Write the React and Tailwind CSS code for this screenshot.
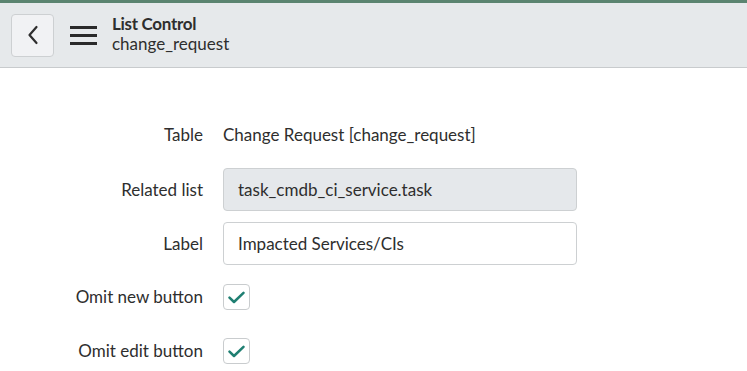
import React from "react";

const Check = () => (
  <div className="w-[27px] h-[26px] rounded-[4px] border border-[#c9ccce] bg-white flex items-center justify-center">
    <svg width="17" height="13" viewBox="0 0 17 13" fill="none">
      <path d="M1.5 6.6 L6 11 L15.5 1.8" stroke="#1f7f72" strokeWidth="2.5" strokeLinecap="round" strokeLinejoin="round" />
    </svg>
  </div>
);

const Row = ({ label, children, className = "" }) => (
  <div className={`flex items-center ${className}`}>
    <div className="w-[203px] text-right text-[17px] leading-[24px] text-[#2e2e2e]">{label}</div>
    <div className="ml-[20px] flex items-center">{children}</div>
  </div>
);

export default function App() {
  return (
    <div
      className="w-[747px] h-[371px] bg-white overflow-hidden text-[#2e2e2e]"
      style={{ fontFamily: "Lato, 'Open Sans', sans-serif" }}
    >
      <div className="h-[3px] bg-[#5b8470]" />
      <div className="h-[65px] bg-[#e6e9eb] border-b border-[#c8cbcd] flex items-center">
        <button className="ml-[11px] w-[43px] h-[43px] rounded-[4px] border border-[#cdd0d2] bg-[#f1f2f4] flex items-center justify-center">
          <svg width="12" height="20" viewBox="0 0 12 20" fill="none">
            <path d="M9.5 2 L2.5 10 L9.5 18" stroke="#2e2e2e" strokeWidth="2.2" strokeLinecap="round" strokeLinejoin="round" />
          </svg>
        </button>
        <div className="ml-[16px] flex flex-col gap-[5px]">
          <div className="w-[27px] h-[3px] bg-[#2a2a2a]" />
          <div className="w-[27px] h-[3px] bg-[#2a2a2a]" />
          <div className="w-[27px] h-[3px] bg-[#2a2a2a]" />
        </div>
        <div className="ml-[15px] flex flex-col leading-[20px] -mt-[3px]">
          <span className="text-[17px] font-bold tracking-[-0.3px]">List Control</span>
          <span className="text-[17px]">change_request</span>
        </div>
      </div>

      <div className="pt-[55px] flex flex-col">
        <Row label="Table" className="h-[24px]">
          <span className="text-[17px] leading-[24px]">Change Request [change_request]</span>
        </Row>
        <Row label="Related list" className="mt-[21px]">
          <div className="w-[354px] h-[43px] rounded-[4px] border border-[#cdd0d2] bg-[#e5e8eb] flex items-center px-[14px] text-[17px]">
            task_cmdb_ci_service.task
          </div>
        </Row>
        <Row label="Label" className="mt-[11px]">
          <div className="w-[354px] h-[43px] rounded-[4px] border border-[#cdd0d2] bg-white flex items-center px-[14px] text-[17px]">
            Impacted Services/CIs
          </div>
        </Row>
        <Row label="Omit new button" className="mt-[19px]">
          <Check />
        </Row>
        <Row label="Omit edit button" className="mt-[28px]">
          <Check />
        </Row>
      </div>
    </div>
  );
}
